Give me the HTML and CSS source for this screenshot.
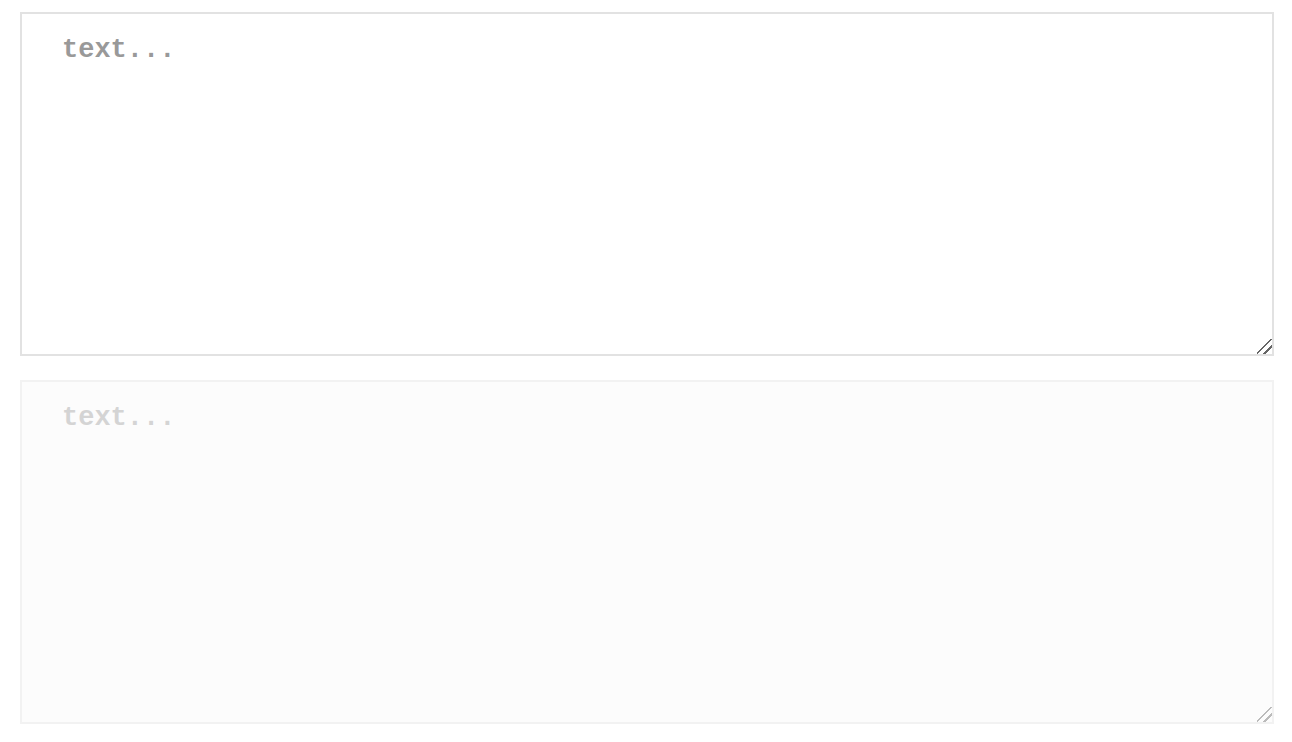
FILE: index.html
```html
<!DOCTYPE html>
<html>
<head>
<meta charset="utf-8">
<link rel="stylesheet" href="styles.css">
</head>
<body>
<div class="stack">
  <textarea class="field" placeholder="text..."></textarea>
  <textarea class="field" placeholder="text..." disabled></textarea>
</div>
</body>
</html>
```
FILE: styles.css
```css
html, body {
  margin: 0;
  background: #fff;
}
.stack {
  display: flex;
  flex-direction: column;
  gap: 24px;
  padding: 12px 0 0 20px;
}
.field {
  display: block;
  box-sizing: border-box;
  width: 1254px;
  height: 344px;
  margin: 0;
  padding: 21px 40px;
  border: 2px solid #e2e2e2;
  border-radius: 0;
  background: #fff;
  color: #555;
  font-family: "Courier New", Courier, "Nimbus Mono PS", FreeMono, "Liberation Mono", monospace;
  font-weight: bold;
  font-size: 27px;
  outline: none;
}
.field::placeholder {
  color: #999;
  opacity: 1;
}
.field::-webkit-resizer {
  background: linear-gradient(135deg, transparent 44%, #666 44%, #666 52%, transparent 52%, transparent 70%, #666 70%, #666 78%, transparent 78%);
}
.field:disabled {
  background: #fcfcfc;
  border-color: #f2f2f2;
}
.field:disabled::placeholder {
  color: #d4d4d4;
}
.field:disabled::-webkit-resizer {
  background: linear-gradient(135deg, transparent 44%, #bbb 44%, #bbb 52%, transparent 52%, transparent 70%, #bbb 70%, #bbb 78%, transparent 78%);
}
```
